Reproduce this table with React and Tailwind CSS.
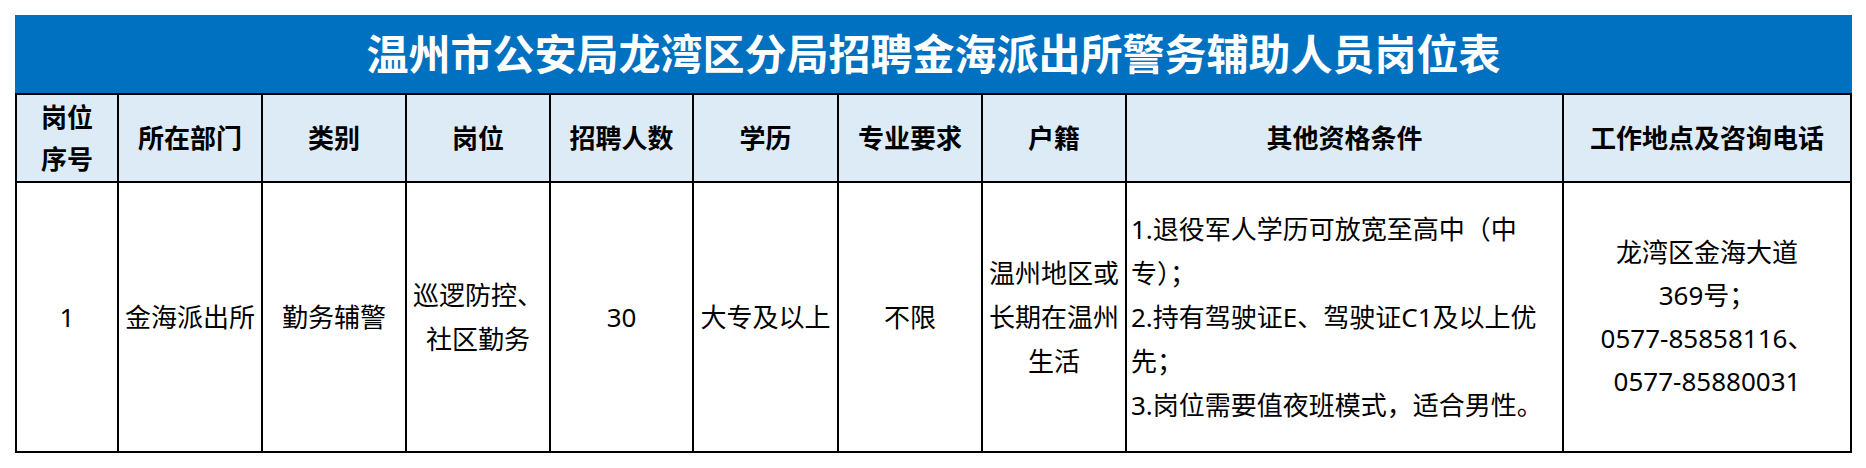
import React from "react";

const FONT = "font-['Noto_Sans','Noto_Sans_CJK_SC',sans-serif]";

const cols = "grid-cols-[102px_144px_144px_144px_143px_145px_144px_144px_437px_288px]";

function Cell({ children, className = "" }) {
  return (
    <div
      className={`border-r-2 border-b-2 border-black flex flex-col items-center justify-center text-center ${className}`}
    >
      {children}
    </div>
  );
}

function Lines({ lines, lh = "leading-[44px]" }) {
  return (
    <>
      {lines.map((l, i) => (
        <div key={i} className={`whitespace-nowrap ${lh}`}>
          {l}
        </div>
      ))}
    </>
  );
}

export default function App() {
  const headers = [
    ["岗位", "序号"],
    ["所在部门"],
    ["类别"],
    ["岗位"],
    ["招聘人数"],
    ["学历"],
    ["专业要求"],
    ["户籍"],
    ["其他资格条件"],
    ["工作地点及咨询电话"],
  ];

  return (
    <div className={`w-[1866px] h-[468px] bg-white pt-[15px] pl-[15px] ${FONT}`}>
      <div className="w-[1837px] h-[78px] bg-[#0070c0] flex items-center justify-center">
        <span className="text-white font-bold text-[42px] leading-none">
          温州市公安局龙湾区分局招聘金海派出所警务辅助人员岗位表
        </span>
      </div>
      <div className={`grid ${cols} w-[1837px] border-l-2 border-t-2 border-black text-black`}>
        {headers.map((h, i) => (
          <Cell key={i} className="h-[88px] bg-[#ddebf7] font-bold text-[26px]">
            <Lines lines={h} lh="leading-[42px]" />
          </Cell>
        ))}

        <Cell className="h-[270px] text-[26px]">
          <Lines lines={["1"]} />
        </Cell>
        <Cell className="h-[270px] text-[26px]">
          <Lines lines={["金海派出所"]} />
        </Cell>
        <Cell className="h-[270px] text-[26px]">
          <Lines lines={["勤务辅警"]} />
        </Cell>
        <Cell className="h-[270px] text-[26px]">
          <Lines lines={["巡逻防控、", "社区勤务"]} />
        </Cell>
        <Cell className="h-[270px] text-[26px]">
          <Lines lines={["30"]} />
        </Cell>
        <Cell className="h-[270px] text-[26px]">
          <Lines lines={["大专及以上"]} />
        </Cell>
        <Cell className="h-[270px] text-[26px]">
          <Lines lines={["不限"]} />
        </Cell>
        <Cell className="h-[270px] text-[26px]">
          <Lines lines={["温州地区或", "长期在温州", "生活"]} />
        </Cell>
        <div className="h-[270px] border-r-2 border-b-2 border-black flex flex-col justify-center items-start text-left pl-[4px] text-[26px]">
          <Lines
            lines={[
              "1.退役军人学历可放宽至高中（中",
              "专）；",
              "2.持有驾驶证E、驾驶证C1及以上优",
              "先；",
              "3.岗位需要值夜班模式，适合男性。",
            ]}
          />
        </div>
        <Cell className="h-[270px] text-[26px]">
          <Lines
            lines={["龙湾区金海大道", "369号；", "0577-85858116、", "0577-85880031"]}
            lh="leading-[43px]"
          />
        </Cell>
      </div>
    </div>
  );
}
